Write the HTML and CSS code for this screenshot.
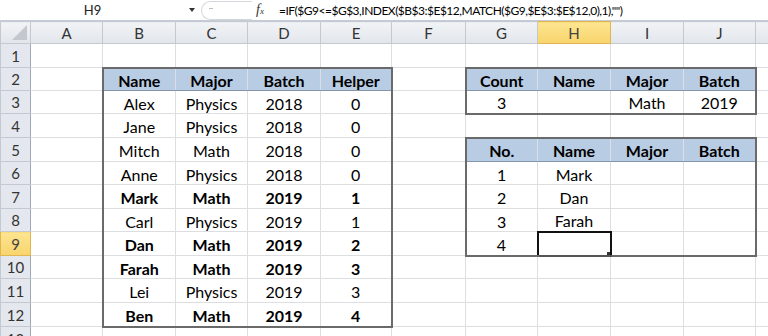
FILE: index.html
```html
<!DOCTYPE html>
<html lang="en">
<head>
  <meta charset="UTF-8">
  <meta name="viewport" content="width=device-width, initial-scale=1.0">
  <title>Lookup with helper column</title>
  <link rel="stylesheet" href="styles.css">
</head>
<body>
  <div class="formula-bar">
    <div class="name-box">
      <span class="cell-ref">H9</span>
      <span class="dropdown"></span>
    </div>
    <div class="splitter"><span class="grip"></span></div>
    <div class="fx"><i>f</i><span class="fx-x">x</span></div>
    <div class="formula">=IF($G9&lt;=$G$3,INDEX($B$3:$E$12,MATCH($G9,$E$3:$E$12,0),1),"")</div>
  </div>

  <table class="sheet">
    <colgroup>
      <col class="w-head">
      <col class="w72"><col class="w73"><col class="w72"><col class="w73"><col class="w71">
      <col class="w74"><col class="w72"><col class="w73"><col class="w73"><col class="w72">
      <col class="w-rest">
    </colgroup>
    <thead>
      <tr class="col-heads">
        <th class="corner"><span class="corner-tri"></span></th>
        <th>A</th><th>B</th><th>C</th><th>D</th><th>E</th>
        <th>F</th><th>G</th><th class="active">H</th><th>I</th><th>J</th><th></th>
      </tr>
    </thead>
    <tbody>
      <tr class="h24">
        <th>1</th>
        <td></td><td></td><td></td><td></td><td></td><td></td><td></td><td></td><td></td><td></td><td></td>
      </tr>
      <tr class="h23">
        <th>2</th>
        <td></td>
        <td class="hd bx-t bx-l">Name</td><td class="hd bx-t">Major</td><td class="hd bx-t">Batch</td><td class="hd bx-t bx-r">Helper</td>
        <td></td>
        <td class="hd bx-t bx-l">Count</td><td class="hd bx-t">Name</td><td class="hd bx-t">Major</td><td class="hd bx-t bx-r">Batch</td>
        <td></td>
      </tr>
      <tr class="h23">
        <th>3</th>
        <td></td>
        <td class="bx-l">Alex</td><td>Physics</td><td>2018</td><td class="bx-r">0</td>
        <td></td>
        <td class="bx-l bx-b">3</td><td class="bx-b"></td><td class="bx-b">Math</td><td class="bx-r bx-b">2019</td>
        <td></td>
      </tr>
      <tr class="h24">
        <th>4</th>
        <td></td>
        <td class="bx-l">Jane</td><td>Physics</td><td>2018</td><td class="bx-r">0</td>
        <td></td><td></td><td></td><td></td><td></td><td></td>
      </tr>
      <tr class="h24">
        <th>5</th>
        <td></td>
        <td class="bx-l">Mitch</td><td>Math</td><td>2018</td><td class="bx-r">0</td>
        <td></td>
        <td class="hd bx-t bx-l">No.</td><td class="hd bx-t">Name</td><td class="hd bx-t">Major</td><td class="hd bx-t bx-r">Batch</td>
        <td></td>
      </tr>
      <tr class="h23">
        <th>6</th>
        <td></td>
        <td class="bx-l">Anne</td><td>Physics</td><td>2018</td><td class="bx-r">0</td>
        <td></td>
        <td class="bx-l">1</td><td>Mark</td><td></td><td class="bx-r"></td>
        <td></td>
      </tr>
      <tr class="h24 strong">
        <th>7</th>
        <td></td>
        <td class="bx-l">Mark</td><td>Math</td><td>2019</td><td class="bx-r">1</td>
        <td></td>
        <td class="bx-l plain">2</td><td class="plain">Dan</td><td></td><td class="bx-r"></td>
        <td></td>
      </tr>
      <tr class="h23">
        <th>8</th>
        <td></td>
        <td class="bx-l">Carl</td><td>Physics</td><td>2019</td><td class="bx-r">1</td>
        <td></td>
        <td class="bx-l">3</td><td>Farah</td><td></td><td class="bx-r"></td>
        <td></td>
      </tr>
      <tr class="h24 strong">
        <th class="active">9</th>
        <td></td>
        <td class="bx-l">Dan</td><td>Math</td><td>2019</td><td class="bx-r">2</td>
        <td></td>
        <td class="bx-l bx-b plain">4</td><td class="bx-b selected"></td><td class="bx-b"></td><td class="bx-r bx-b"></td>
        <td></td>
      </tr>
      <tr class="h23 strong">
        <th>10</th>
        <td></td>
        <td class="bx-l">Farah</td><td>Math</td><td>2019</td><td class="bx-r">3</td>
        <td></td><td></td><td></td><td></td><td></td><td></td>
      </tr>
      <tr class="h24">
        <th>11</th>
        <td></td>
        <td class="bx-l">Lei</td><td>Physics</td><td>2019</td><td class="bx-r">3</td>
        <td></td><td></td><td></td><td></td><td></td><td></td>
      </tr>
      <tr class="h24 strong">
        <th>12</th>
        <td></td>
        <td class="bx-l bx-b">Ben</td><td class="bx-b">Math</td><td class="bx-b">2019</td><td class="bx-r bx-b">4</td>
        <td></td><td></td><td></td><td></td><td></td><td></td>
      </tr>
      <tr class="h24">
        <th>13</th>
        <td></td><td></td><td></td><td></td><td></td><td></td><td></td><td></td><td></td><td></td><td></td>
      </tr>
    </tbody>
  </table>
</body>
</html>
```

FILE: styles.css
```css
* {
  box-sizing: border-box;
}

body {
  margin: 0;
  width: 768px;
  height: 336px;
  overflow: hidden;
  background: #fff;
  font-family: Lato, "Open Sans", sans-serif;
  color: #000;
}

/* Formula bar */
.formula-bar {
  display: flex;
  align-items: center;
  height: 21px;
  border-bottom: 1px solid #c6ccd4;
  background: #fff;
}

.name-box {
  display: flex;
  align-items: center;
  width: 201px;
  height: 100%;
  padding-right: 4px;
}

.cell-ref {
  flex: 1;
  text-align: center;
  font-size: 13px;
  color: #222;
  padding-right: 4px;
}

.dropdown {
  width: 0;
  height: 0;
  margin-right: 2px;
  border-left: 3px solid transparent;
  border-right: 3px solid transparent;
  border-top: 4px solid #333;
}

.splitter {
  display: flex;
  align-items: center;
  width: 51px;
  height: 19px;
  border: 1px solid #d3d7dc;
  border-right: none;
  border-radius: 10px 0 0 10px;
  padding-left: 7px;
}

.grip {
  width: 4px;
  height: 1px;
  background: #b9bec5;
  margin-top: -4px;
}

.fx {
  width: 25px;
  font-family: "Liberation Serif", serif;
  font-size: 14px;
  color: #333;
  padding-left: 4px;
}

.fx-x {
  font-size: 9px;
  font-style: italic;
}

.formula {
  flex: 1;
  font-size: 12px;
  letter-spacing: -0.5px;
  padding-left: 2px;
  white-space: nowrap;
}

/* Sheet grid */
.sheet {
  border-collapse: collapse;
  table-layout: fixed;
  width: 768px;
  font-size: 16px;
}

.w-head { width: 30px; }
.w71 { width: 71px; }
.w72 { width: 72px; }
.w73 { width: 73px; }
.w74 { width: 74px; }
.w-rest { width: 13px; }

.h23 { height: 23px; }
.h24 { height: 24px; }

.col-heads { height: 22px; }

.sheet th {
  font-weight: normal;
  font-size: 15px;
  color: #333;
  background: linear-gradient(#f1f3f6, #e2e6eb);
  border: 1px solid #c4c9d1;
  padding: 0;
  text-align: center;
}

.sheet tbody th {
  background: #e4e8ee;
  border-color: #c4c9d1 #9eaab8 #c4c9d1 #c4c9d1;
}

.sheet th.active {
  background: linear-gradient(#fde591, #f8d46c);
  border-color: #e0b650;
  color: #444;
}

.corner {
  position: relative;
}

.corner-tri {
  position: absolute;
  right: 3px;
  bottom: 3px;
  width: 0;
  height: 0;
  border-left: 15px solid transparent;
  border-bottom: 15px solid #c3c8cf;
}

.sheet td {
  border: 1px solid #dcdee1;
  padding: 2px 0 0;
  text-align: center;
  white-space: nowrap;
  overflow: hidden;
}

.strong td {
  font-weight: bold;
}

.strong td.plain {
  font-weight: normal;
}

/* Formatted ranges */
.sheet td.hd {
  background: #b8cce4;
  font-weight: bold;
  border-bottom: 1px solid #8596ab;
}

.sheet td.bx-t { border-top: 2px solid #6a6a6a; }
.sheet td.bx-b { border-bottom: 2px solid #6a6a6a; }
.sheet td.bx-l { border-left: 2px solid #6a6a6a; }
.sheet td.bx-r { border-right: 2px solid #6a6a6a; }

.sheet td.selected {
  position: relative;
  border: 2px solid #111;
  border-bottom-color: #555;
}

.selected::after {
  content: "";
  position: absolute;
  right: -4px;
  bottom: -4px;
  width: 6px;
  height: 6px;
  background: #333;
  border: 1px solid #fff;
}
```
